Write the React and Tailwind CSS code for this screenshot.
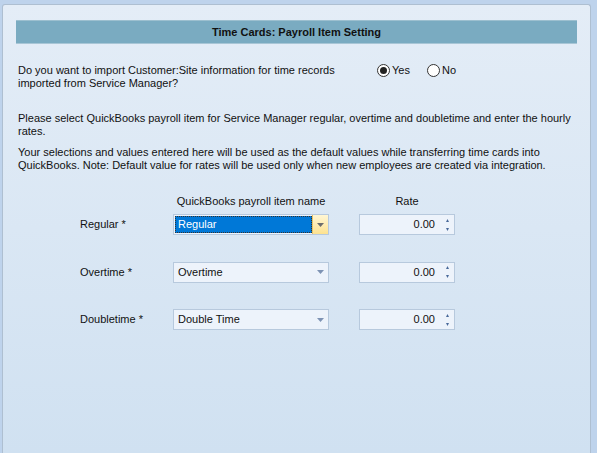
import { useState } from 'react';

const rows = [
    { label: 'Regular *', item: 'Regular', rate: '0.00', active: true },
    { label: 'Overtime *', item: 'Overtime', rate: '0.00' },
    { label: 'Doubletime *', item: 'Double Time', rate: '0.00' },
];

function Radio({ checked, label, onClick }) {
    return (
        <label className="flex items-center gap-[2px] cursor-default" onClick={onClick}>
            <span className="flex h-[13px] w-[13px] items-center justify-center rounded-full border border-[#333] bg-white">
                {checked && <span className="h-[7px] w-[7px] rounded-full bg-[#222]" />}
            </span>
            <span>{label}</span>
        </label>
    );
}

function Arrow({ hot }) {
    return (
        <div className={`flex h-full w-[16px] items-center justify-center ${hot ? 'border-l border-[#e5c365] bg-gradient-to-b from-[#fff6d4] to-[#fde28f]' : ''}`}>
            <svg width="7" height="4" viewBox="0 0 7 4">
                <path d="M0 0h7L3.5 4z" fill={hot ? '#6d6d6d' : '#7e93b4'} />
            </svg>
        </div>
    );
}

function Spinner() {
    return (
        <div className="flex h-full w-[14px] flex-col items-center justify-center gap-[6px]">
            <svg width="3" height="3" viewBox="0 0 3 3"><path d="M0 3h3L1.5 0z" fill="#4a6a9a" /></svg>
            <svg width="3" height="3" viewBox="0 0 3 3"><path d="M0 0h3L1.5 3z" fill="#4a6a9a" /></svg>
        </div>
    );
}

export default function App() {
    const [importSite, setImportSite] = useState(true);

    return (
        <div className="flex h-[453px] w-[597px] flex-col overflow-hidden bg-[#bed3ec] pt-[4px] text-[11px] leading-[13px] text-[#111]" style={{ fontFamily: '"Liberation Sans", Arial, sans-serif' }}>
            <div className="flex flex-1">
                {/* Panel */}
                <div className="ml-[2px] flex w-[589px] flex-col rounded-t-[3px] border-l border-r border-t border-[#aebfd1] bg-gradient-to-b from-[#e4edf7] to-[#d0e1f1] px-[13px] pt-[15px]">
                    {/* Header */}
                    <div className="flex h-[24px] items-center justify-center border-b border-t border-b-[#a8c6d6] border-t-[#9cbfcf] bg-[#7aabc1] font-bold text-[#111]">
                        Time Cards: Payroll Item Setting
                    </div>

                    {/* Import question */}
                    <div className="mt-[20px] flex items-start pl-[2px]">
                        <p className="w-[345px]">
                            Do you want to import Customer:Site information for time records imported from Service Manager?
                        </p>
                        <div className="ml-[14px] flex gap-[17px]">
                            <Radio checked={importSite} label="Yes" onClick={() => setImportSite(true)} />
                            <Radio checked={!importSite} label="No" onClick={() => setImportSite(false)} />
                        </div>
                    </div>

                    {/* Notes */}
                    <p className="mt-[22px] pl-[2px]">
                        Please select QuickBooks payroll item for Service Manager regular, overtime and doubletime and enter the hourly rates.
                    </p>
                    <p className="mt-[8px] pl-[2px]">
                        Your selections and values entered here will be used as the default values while transferring time cards into QuickBooks. Note: Default value for rates will be used only when new employees are created via integration.
                    </p>

                    {/* Column headers */}
                    <div className="mt-[23px] flex">
                        <div className="w-[157px]" />
                        <div className="w-[156px] text-center">QuickBooks payroll item name</div>
                        <div className="ml-[30px] w-[96px] text-center">Rate</div>
                    </div>

                    {/* Rows */}
                    <div className="mt-[6px] flex flex-col gap-[26.5px]">
                        {rows.map((r) => (
                            <div key={r.label} className="flex h-[21px] items-center">
                                <div className="w-[64px]" />
                                <div className="w-[93px] text-[#111]">{r.label}</div>
                                <div className="flex h-[21px] w-[156px] items-center border border-[#b7c9dd] bg-[#edf3fb]">
                                    {r.active ? (
                                        <div className="ml-[1px] flex h-[17px] flex-1 items-center border border-dotted border-[#333] bg-[#0078d7] pl-[2px] text-white">
                                            {r.item}
                                        </div>
                                    ) : (
                                        <div className="flex-1 pl-[4px]">{r.item}</div>
                                    )}
                                    <Arrow hot={r.active} />
                                </div>
                                <div className="ml-[30px] flex h-[21px] w-[96px] items-center border border-[#b7c9dd] bg-[#edf3fb]">
                                    <div className="flex-1 pr-[5px] text-right">{r.rate}</div>
                                    <Spinner />
                                </div>
                            </div>
                        ))}
                    </div>
                </div>
            </div>
        </div>
    );
}
